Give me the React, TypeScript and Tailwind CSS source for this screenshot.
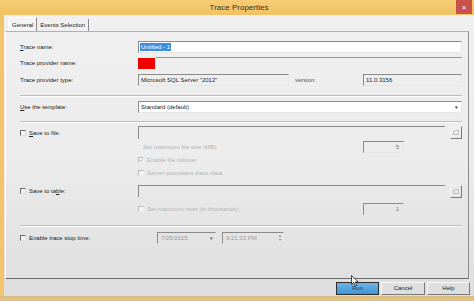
import React from "react";

const sunken =
  "border-t border-l border-t-[#8a8a8a] border-l-[#8a8a8a] border-b border-r border-b-[#e6e6e6] border-r-[#e6e6e6]";

function Check({ checked, disabled }: { checked?: boolean; disabled?: boolean }) {
  return (
    <span
      className={`flex h-[6px] w-[6px] shrink-0 items-center justify-center border-t border-l border-b border-r ${
        disabled
          ? "border-t-[#b8b8b8] border-l-[#b8b8b8] border-b-[#eee] border-r-[#eee]"
          : "border-t-[#6a6a6a] border-l-[#6a6a6a] border-b-[#ddd] border-r-[#ddd]"
      } bg-[#f4f4f4]`}
    >
      {checked && (
        <svg width="5" height="5" viewBox="0 0 5 5">
          <path d="M0.6 2.4 L2 3.8 L4.4 0.8" stroke="#9a9a9a" strokeWidth="1" fill="none" />
        </svg>
      )}
    </span>
  );
}

function Browse() {
  return (
    <span className="ml-[5px] flex h-[13px] w-[12px] items-center justify-center border-r border-b border-r-[#7a7a7a] border-b-[#7a7a7a] border-t border-l border-t-[#f2f2f2] border-l-[#f2f2f2]">
      <svg width="6" height="5" viewBox="0 0 6 5">
        <path d="M0.5 4.5 L0.5 1.5 L2 1.5 L2.5 0.5 L5.5 0.5 L5.5 4.5 Z" fill="none" stroke="#b4b4b4" strokeWidth="0.8" />
      </svg>
    </span>
  );
}

function Sep() {
  return (
    <div className="flex flex-col">
      <div className="h-px bg-[#bdbdbd]" />
      <div className="h-px bg-white" />
    </div>
  );
}

export default function App() {
  return (
    <div className="relative flex h-[301px] w-[474px] flex-col overflow-hidden bg-[#f3c46a] font-['Liberation_Sans',Arial,sans-serif] text-[6px] leading-none text-[#222]">
      {/* title bar */}
      <div className="relative flex h-[15px] shrink-0 items-center justify-center bg-gradient-to-b from-[#f7cd75] to-[#f2c163]">
        <span className="pl-[4px] text-[8px] text-[#3a3326]">Trace Properties</span>
        <span className="absolute right-[2px] top-0 flex h-[14px] w-[16px] items-center justify-center bg-[#c9524c] text-[7px] font-bold text-[#f4dcd8]">
          ×
        </span>
      </div>

      <div className="flex min-h-0 flex-1 pl-[4px]">
        <div className="flex flex-1 flex-col bg-gradient-to-b from-[#f0f0f0] via-[#ececec] to-[#dedede]">
          {/* tabs */}
          <div className="flex h-[16px] shrink-0 items-end pl-[4px]">
            <div className="flex h-[14px] items-center border-t border-l border-r border-t-white border-l-white border-r-[#8a8a8a] bg-[#f4f4f4] px-[3px]">
              General
            </div>
            <div className="flex h-[12px] items-center border-r border-r-[#8a8a8a] px-[3px]">
              Events Selection
            </div>
          </div>

          {/* panel */}
          <div className="ml-[1px] mr-[5px] flex h-[248px] shrink-0 flex-col border border-t-[#b0b0b0] border-l-white border-r-[#8c8c8c] border-b-[#6c6c6c] pl-[14px] pr-[6px]">
            <div className="mt-[9px] flex h-[12px] items-center">
              <span className="w-[118px]">
                <u>T</u>race name:
              </span>
              <div className={`flex h-full flex-1 items-center bg-white pl-[1px] ${sunken}`}>
                <span className="bg-[#3d8ee0] px-[1px] py-[1px] text-white">Untitled - 1</span>
              </div>
            </div>

            <div className="mt-[4px] flex h-[12px] items-center">
              <span className="w-[118px]">Trace provider name:</span>
              <div className="h-[11px] w-[17px] bg-[#f00000]" />
              <div className="ml-px h-full flex-1 border-t border-t-[#9a9a9a]" />
            </div>

            <div className="mt-[5px] flex h-[12px] items-center">
              <span className="w-[118px]">Trace provider type:</span>
              <div className={`flex h-full w-[151px] items-center pl-[2px] ${sunken}`}>
                Microsoft SQL Server "2012"
              </div>
              <span className="ml-[6px] w-[68px] text-[#555]">version:</span>
              <div className={`flex h-full flex-1 items-center pl-[2px] ${sunken}`}>11.0.3156</div>
            </div>

            <div className="mt-[9px]">
              <Sep />
            </div>

            <div className="mt-[4px] flex h-[12px] items-center">
              <span className="w-[118px]">
                <u>U</u>se the template:
              </span>
              <div className={`flex h-full flex-1 items-center justify-between bg-white pl-[2px] ${sunken}`}>
                <span>Standard (default)</span>
                <span className="mr-px flex h-[9px] w-[8px] items-center justify-center text-[5px] text-[#222]">▾</span>
              </div>
            </div>

            <div className="mt-[8px]">
              <Sep />
            </div>

            <div className="mt-[3px] flex h-[13px] items-center">
              <span className="flex w-[118px] items-center gap-[3px]">
                <Check />
                <span>
                  <u>S</u>ave to file:
                </span>
              </span>
              <div className={`h-full flex-1 ${sunken} border-r-0 border-b-0`} />
              <Browse />
            </div>

            <div className="mt-[2px] flex h-[12px] items-center">
              <span className="w-[118px]" />
              <span className="w-[225px] pl-[5px] text-[#b4b4b4]">Set maximum file size (MB):</span>
              <div className={`flex h-full w-[41px] items-center justify-end pr-[4px] text-[#777] ${sunken}`}>5</div>
            </div>

            <div className="mt-[2px] flex h-[10px] items-center">
              <span className="w-[118px]" />
              <Check checked disabled />
              <span className="ml-[3px] text-[#b4b4b4]">Enable file rollover</span>
            </div>

            <div className="mt-[3px] flex h-[10px] items-center">
              <span className="w-[118px]" />
              <Check disabled />
              <span className="ml-[3px] text-[#b4b4b4]">Server processes trace data</span>
            </div>

            <div className="mt-[7px] flex h-[12px] items-center">
              <span className="flex w-[118px] items-center gap-[3px]">
                <Check />
                <span>
                  Save to ta<u>b</u>le:
                </span>
              </span>
              <div className={`h-full flex-1 ${sunken} border-r-0 border-b-0`} />
              <Browse />
            </div>

            <div className="mt-[6px] flex h-[12px] items-center">
              <span className="w-[118px]" />
              <Check disabled />
              <span className="ml-[3px] w-[216px] text-[#b4b4b4]">Set maximum rows (in thousands):</span>
              <div className={`flex h-full w-[41px] items-center justify-end pr-[4px] text-[#777] ${sunken}`}>1</div>
            </div>

            <div className="mt-[10px]">
              <Sep />
            </div>

            <div className="mt-[5px] flex h-[12px] items-center">
              <span className="flex w-[137px] items-center gap-[3px]">
                <Check />
                <span>Enable trace stop time:</span>
              </span>
              <div className={`flex h-full w-[59px] items-center justify-between pl-[3px] text-[#9a9a9a] ${sunken}`}>
                <span>7/25/2015</span>
                <span className="mr-[2px] text-[5px] text-[#555]">▾</span>
              </div>
              <div className={`ml-[6px] flex h-full w-[62px] items-center justify-between pl-[3px] text-[#9a9a9a] ${sunken}`}>
                <span>9:21:33 PM</span>
                <span className="mr-[2px] flex flex-col text-[4px] leading-[4px] text-[#777]">
                  <span>▴</span>
                  <span>▾</span>
                </span>
              </div>
            </div>
          </div>

          {/* buttons */}
          <div className="flex flex-1 items-center justify-end pr-[4px] pt-[1px]">
            <div className="flex h-[13px] w-[43px] items-center justify-center border border-[#2c2c2c] bg-gradient-to-b from-[#6db4e6] to-[#3f95d4] text-[#1e3c58]">
              Run
            </div>
            <div className="ml-[2px] flex h-[13px] w-[44px] items-center justify-center border-r border-b border-r-[#7a7a7a] border-b-[#7a7a7a] border-t border-l border-t-[#f8f8f8] border-l-[#f8f8f8]">
              Cancel
            </div>
            <div className="ml-[2px] flex h-[13px] w-[43px] items-center justify-center border-r border-b border-r-[#7a7a7a] border-b-[#7a7a7a] border-t border-l border-t-[#f8f8f8] border-l-[#f8f8f8]">
              Help
            </div>
          </div>
        </div>
      </div>

      {/* bottom frame */}
      <div className="h-[5px] shrink-0 bg-gradient-to-b from-[#d9bf8c] to-[#e7c27a]" />

      {/* mouse cursor */}
      <svg className="absolute left-[351px] top-[275px]" width="8" height="12" viewBox="0 0 8 12">
        <path d="M0.5 0.5 L0.5 9.5 L2.8 7.4 L4.4 11 L5.8 10.4 L4.3 6.9 L7.3 6.9 Z" fill="#fff" stroke="#222" strokeWidth="0.8" />
      </svg>
    </div>
  );
}
